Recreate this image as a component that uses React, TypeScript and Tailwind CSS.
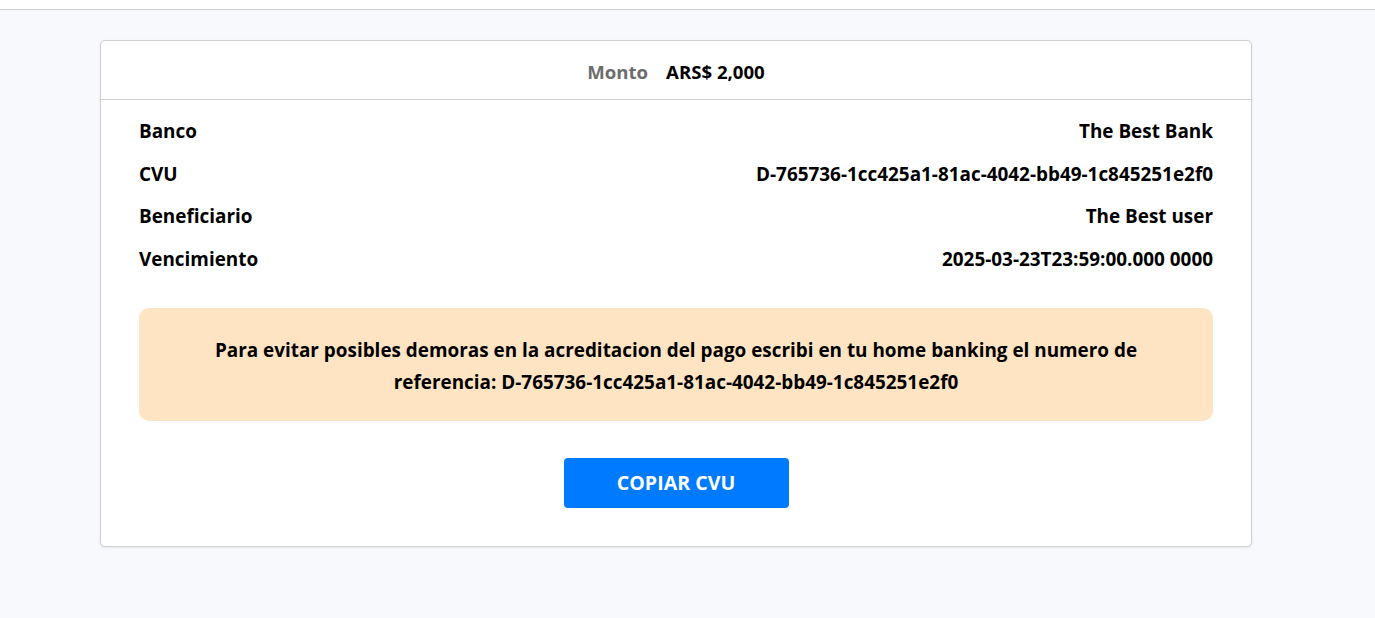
import { useState } from 'react'

const rows = [
  { label: 'Banco', value: 'The Best Bank' },
  { label: 'CVU', value: 'D-765736-1cc425a1-81ac-4042-bb49-1c845251e2f0' },
  { label: 'Beneficiario', value: 'The Best user' },
  { label: 'Vencimiento', value: '2025-03-23T23:59:00.000 0000' },
]

export default function App() {
  const [copied, setCopied] = useState(false)
  const cvu = rows[1].value

  const handleCopy = () => {
    navigator.clipboard?.writeText(cvu).catch(() => {})
    setCopied(true)
  }

  return (
    <div className="min-h-[618px] bg-[#f8f9fc] font-['Open_Sans',sans-serif] text-black">
      <div className="h-[10px] bg-white border-b border-[#d0d0d0]" />
      <div className="px-[100px] pt-[30px]">
        <div className="w-[1152px] bg-white border border-[#cfcfcf] rounded-[5px] shadow-[0_1px_3px_rgba(0,0,0,0.08)]">
          <div className="h-[59px] pt-[3px] flex items-center justify-center gap-[18px] border-b border-[#cfcfcf] text-[18.6px] font-bold">
            <span className="text-[#6c6c6c]">Monto</span>
            <span>ARS$ 2,000</span>
          </div>
          <div className="px-[38px] pt-[18px] pb-[38px]">
            <div className="flex flex-col gap-[16px]">
              {rows.map((r) => (
                <div key={r.label} className="flex justify-between text-[18.9px] font-bold leading-[26.5px]">
                  <span>{r.label}</span>
                  <span>{r.value}</span>
                </div>
              ))}
            </div>
            <div className="mt-[36px] bg-[#ffe4c4] rounded-[10px] px-[40px] pt-[26px] pb-[23px] text-center text-[18.9px] font-bold leading-[32px]">
              Para evitar posibles demoras en la acreditacion del pago escribi en tu home banking el numero de
              <br />
              referencia: {cvu}
            </div>
            <div className="flex justify-center mt-[37px]">
              <button
                onClick={handleCopy}
                className="w-[225px] h-[50px] bg-[#007bff] text-white rounded-[4px] text-[19.6px] font-bold"
              >
                {copied ? 'COPIADO' : 'COPIAR CVU'}
              </button>
            </div>
          </div>
        </div>
      </div>
    </div>
  )
}
